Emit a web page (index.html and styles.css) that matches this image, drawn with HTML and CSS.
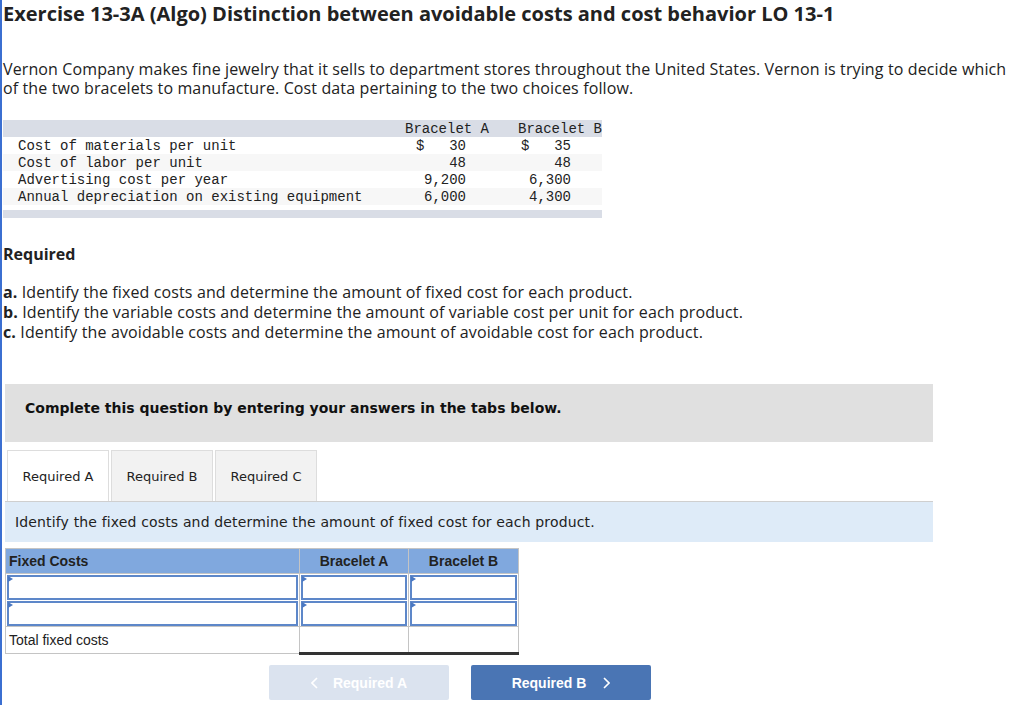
FILE: index.html
```html
<!DOCTYPE html>
<html>
<head>
<meta charset="utf-8">
<link rel="stylesheet" href="styles.css">
</head>
<body>
<div class="page">
  <h1 class="title">Exercise 13-3A (Algo) Distinction between avoidable costs and cost behavior LO 13-1</h1>
  <p class="intro">Vernon Company makes fine jewelry that it sells to department stores throughout the United States. Vernon is trying to decide which of the two bracelets to manufacture. Cost data pertaining to the two choices follow.</p>

  <div class="data">
    <div class="drow dhead"><span class="dlabel"></span><span class="dval">Bracelet A</span><span class="dval">Bracelet B</span></div>
    <div class="drow"><span class="dlabel">Cost of materials per unit</span><span class="dval"><span>$</span><span>30</span></span><span class="dval"><span>$</span><span>35</span></span></div>
    <div class="drow alt"><span class="dlabel">Cost of labor per unit</span><span class="dval"><span></span><span>48</span></span><span class="dval"><span></span><span>48</span></span></div>
    <div class="drow"><span class="dlabel">Advertising cost per year</span><span class="dval"><span></span><span>9,200</span></span><span class="dval"><span></span><span>6,300</span></span></div>
    <div class="drow alt"><span class="dlabel">Annual depreciation on existing equipment</span><span class="dval"><span></span><span>6,000</span></span><span class="dval"><span></span><span>4,300</span></span></div>
    <div class="dfoot"></div>
  </div>

  <h2 class="req">Required</h2>
  <ol class="reqlist">
    <li><b>a.</b> Identify the fixed costs and determine the amount of fixed cost for each product.</li>
    <li><b>b.</b> Identify the variable costs and determine the amount of variable cost per unit for each product.</li>
    <li><b>c.</b> Identify the avoidable costs and determine the amount of avoidable cost for each product.</li>
  </ol>

  <div class="complete">Complete this question by entering your answers in the tabs below.</div>

  <div class="tabs">
    <div class="tab active">Required A</div>
    <div class="tab">Required B</div>
    <div class="tab">Required C</div>
  </div>
  <div class="instr">Identify the fixed costs and determine the amount of fixed cost for each product.</div>

  <table class="answer">
    <colgroup><col class="c1"><col class="c2"><col class="c3"></colgroup>
    <tr class="ahead"><th class="l">Fixed Costs</th><th>Bracelet A</th><th>Bracelet B</th></tr>
    <tr class="arow"><td><div class="inp"></div></td><td><div class="inp"></div></td><td><div class="inp"></div></td></tr>
    <tr class="arow"><td><div class="inp"></div></td><td><div class="inp"></div></td><td><div class="inp"></div></td></tr>
    <tr class="atotal"><td>Total fixed costs</td><td class="tot"></td><td class="tot"></td></tr>
  </table>

  <div class="nav">
    <button class="btn prev"><svg class="chev l" width="7" height="12" viewBox="0 0 7 12"><polyline points="6,1 1,6 6,11" fill="none" stroke="#fff" stroke-width="1.6"/></svg>Required A</button>
    <button class="btn next">Required B<svg class="chev r" width="7" height="12" viewBox="0 0 7 12"><polyline points="1,1 6,6 1,11" fill="none" stroke="#fff" stroke-width="1.6"/></svg></button>
  </div>
</div>
</body>
</html>
```

FILE: styles.css
```css
html, body {
  margin: 0;
  padding: 0;
  background: #fff;
}
body {
  font-family: "Open Sans", Lato, sans-serif;
  color: #222;
}
.page {
  border-left: 2px solid #3b6fd1;
  min-height: 705px;
  padding-left: 1px;
  box-sizing: border-box;
}
.title {
  margin: 0;
  padding-top: 3px;
  font-size: 20px;
  line-height: 22px;
  font-weight: 700;
  color: #222;
}
.intro {
  margin: 35px 0 0 0;
  font-size: 16px;
  letter-spacing: 0.12px;
  line-height: 19px;
  color: #222;
}
.data {
  margin-top: 22px;
  width: 599px;
  font-family: "Liberation Mono", monospace;
  font-size: 14px;
  color: #222;
}
.drow {
  display: flex;
  height: 17px;
  line-height: 17px;
  padding-top: 1px;
  box-sizing: border-box;
  background: #fff;
}
.drow.alt {
  background: #f7f7f7;
}
.dhead {
  background: #d9dde6;
}
.dlabel {
  flex: 1;
  padding-left: 15px;
}
.dval {
  display: flex;
  justify-content: space-between;
  box-sizing: border-box;
  white-space: pre;
}
.dval:nth-child(2) {
  width: 102px;
  padding-left: 29px;
  padding-right: 23px;
}
.dval:nth-child(3) {
  width: 113px;
  padding-left: 32px;
  padding-right: 31px;
}
.dhead .dval {
  justify-content: flex-end;
  padding-left: 0;
  padding-right: 0;
}
.dfoot {
  margin-top: 5px;
  height: 8px;
  background: #d9dde6;
}
.req {
  margin: 26px 0 0 0;
  font-size: 16px;
  line-height: 20px;
  font-weight: 700;
}
.reqlist {
  list-style: none;
  margin: 18px 0 0 0;
  padding: 0;
  font-size: 16px;
  letter-spacing: 0.12px;
  line-height: 20px;
}
.complete {
  margin: 42px 0 0 2px;
  width: 928px;
  height: 58px;
  box-sizing: border-box;
  background: #e0e0e0;
  font-family: Verdana, "DejaVu Sans", sans-serif;
  font-weight: 700;
  font-size: 14px;
  color: #111;
  padding-left: 20px;
  padding-bottom: 10px;
  display: flex;
  align-items: center;
}
.tabs {
  display: flex;
  gap: 2px;
  margin: 8px 0 0 4px;
}
.tab {
  width: 102px;
  height: 51px;
  box-sizing: border-box;
  border: 1px solid #ddd;
  border-bottom: none;
  background: #f2f2f2;
  font-family: Verdana, "DejaVu Sans", sans-serif;
  font-size: 13px;
  color: #222;
  display: flex;
  align-items: center;
  justify-content: center;
}
.tab.active {
  background: #fff;
}
.instr {
  margin-left: 2px;
  width: 928px;
  height: 41px;
  box-sizing: border-box;
  border-top: 1px solid #cfcfcf;
  background: #deebf8;
  font-family: Verdana, "DejaVu Sans", sans-serif;
  font-size: 14px;
  letter-spacing: 0.15px;
  color: #222;
  padding-left: 10px;
  display: flex;
  align-items: center;
}
.answer {
  margin: 6px 0 0 2px;
  border-collapse: collapse;
  table-layout: fixed;
  width: 513px;
  font-family: Arial, "Liberation Sans", sans-serif;
  font-size: 14px;
  color: #222;
}
.answer col.c1 { width: 294px; }
.answer col.c2 { width: 109px; }
.answer col.c3 { width: 110px; }
.ahead th {
  background: #80a8de;
  height: 25px;
  padding: 0;
  border: 1px solid #c4c4c4;
  font-weight: 700;
  text-align: center;
  box-sizing: border-box;
}
.ahead th.l {
  text-align: left;
  padding-left: 3px;
}
.arow td {
  padding: 1px 1px 0 1px;
  height: 26px;
  border-left: 1px solid #c4c4c4;
  border-right: 1px solid #c4c4c4;
  box-sizing: border-box;
}
.inp {
  position: relative;
  height: 21px;
  border: 2px solid #5d87c9;
  background: #fff;
}
.inp::before {
  content: "";
  position: absolute;
  left: -1px;
  top: -1px;
  border-left: 5px solid #4a78c2;
  border-top: 3px solid transparent;
  border-bottom: 3px solid transparent;
}
.atotal td {
  height: 27px;
  border: 1px solid #c4c4c4;
  padding: 0 0 0 3px;
  box-sizing: border-box;
}
.atotal td.tot {
  border-left: 1px solid #999;
  border-bottom: 3px solid #333;
}
.nav {
  display: flex;
  gap: 22px;
  margin: 10px 0 0 266px;
}
.btn {
  width: 180px;
  height: 35px;
  border: none;
  border-radius: 2px;
  color: #fff;
  font-family: Arial, "Liberation Sans", sans-serif;
  font-weight: 700;
  font-size: 14px;
  display: flex;
  align-items: center;
  justify-content: center;
  padding: 0;
}
.btn.prev {
  background: #dbe3ef;
}
.btn.next {
  background: #4a75b4;
}
.chev.l {
  margin-right: 15px;
}
.chev.r {
  margin-left: 17px;
}
```
